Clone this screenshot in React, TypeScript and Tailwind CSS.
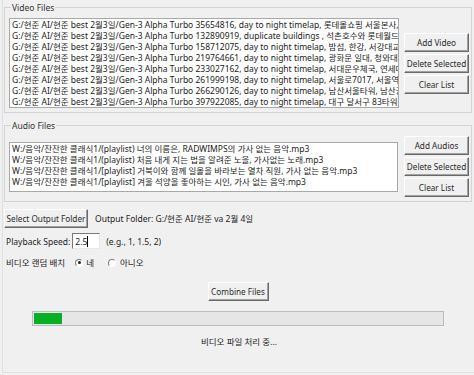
const videoFiles = [
  "G:/현준 AI/현준 best 2월3일/Gen-3 Alpha Turbo 35654816, day to night timelap, 롯데몰쇼핑 서울본사, 소공동",
  "G:/현준 AI/현준 best 2월3일/Gen-3 Alpha Turbo 132890919, duplicate buildings , 석촌호수와 롯데월드타워",
  "G:/현준 AI/현준 best 2월3일/Gen-3 Alpha Turbo 158712075, day to night timelap, 밤섬, 한강, 서강대교",
  "G:/현준 AI/현준 best 2월3일/Gen-3 Alpha Turbo 219764661, day to night timelap, 광화문 일대, 청와대",
  "G:/현준 AI/현준 best 2월3일/Gen-3 Alpha Turbo 233027162, day to night timelap, 서대문우체국, 연세대",
  "G:/현준 AI/현준 best 2월3일/Gen-3 Alpha Turbo 261999198, day to night timelap, 서울로7017, 서울역, 남대문",
  "G:/현준 AI/현준 best 2월3일/Gen-3 Alpha Turbo 266290126, day to night timelap, 남산서울타워, 남산공원",
  "G:/현준 AI/현준 best 2월3일/Gen-3 Alpha Turbo 397922085, day to night timelap, 대구 달서구 83타워, 이월드",
];

const audioFiles = [
  "W:/음악/잔잔한 클래식1/(playlist) 너의 이름은, RADWIMPS의 가사 없는 음악.mp3",
  "W:/음악/잔잔한 클래식1/(playlist) 처음 내게 지는 법을 알려준 노을, 가사없는 노래.mp3",
  "W:/음악/잔잔한 클래식1/[playlist] 거북이와 함께 일몰을 바라보는 열차 직원, 가사 없는 음악.mp3",
  "W:/음악/잔잔한 클래식1/[playlist] 겨울 석양을 좋아하는 시인, 가사 없는 음악.mp3",
];

const Button = ({ label, className = "" }: { label: string; className?: string }) => (
  <div
    className={`flex h-[19px] items-center justify-center whitespace-nowrap border border-t-white border-l-white border-r-[#6a6a6a] border-b-[#6a6a6a] bg-[#f0f0f0] text-[8.2px] text-[#2a2a2a] shadow-[inset_-1px_-1px_0_#a0a0a0] ${className}`}
  >
    {label}
  </div>
);

const Radio = ({ checked }: { checked?: boolean }) => (
  <span className="flex h-[8px] w-[8px] items-center justify-center rounded-full border border-t-[#808080] border-l-[#808080] border-r-white border-b-white bg-white">
    {checked && <span className="h-[3px] w-[3px] rounded-full bg-[#222]" />}
  </span>
);

const Group = ({ label, children }: { label: string; children: React.ReactNode }) => (
  <fieldset className="w-[466px] border border-[#d4d4d4] px-[2px] pt-[5px] pb-[4px]">
    <legend className="ml-[4px] h-[11px] px-[1px] text-[#333]">{label}</legend>
    {children}
  </fieldset>
);

export default function App() {
  return (
    <div className="h-[375px] w-[474px] overflow-hidden bg-[#f0f0f0] font-['Noto_Sans','Noto_Sans_CJK_KR',sans-serif] text-[8.5px] leading-[11px] text-[#222]">
      <div className="ml-[2px] flex h-[373px] flex-col border-b border-l border-[#e0e0e0] pl-[1px] pt-[2px]">
        <Group label="Video Files">
          <div className="flex items-center">
            <div className="ml-[2px] h-[90px] w-[390px] overflow-hidden whitespace-nowrap border border-[#a8a8a8] bg-white pl-[2px]">
              {videoFiles.map((f) => (
                <div key={f}>{f}</div>
              ))}
            </div>
            <div className="ml-[5px] flex w-[65px] flex-col gap-[2px]">
              <Button label="Add Video" />
              <Button label="Delete Selected" />
              <Button label="Clear List" />
            </div>
          </div>
        </Group>

        <div className="mt-[7px]">
          <Group label="Audio Files">
            <div className="flex items-center">
              <div className="ml-[2px] h-[50px] w-[389px] overflow-hidden whitespace-nowrap border border-[#a8a8a8] bg-white pl-[2px]">
                {audioFiles.map((f) => (
                  <div key={f}>{f}</div>
                ))}
              </div>
              <div className="ml-[6px] flex w-[65px] flex-col gap-[2px]">
                <Button label="Add Audios" />
                <Button label="Delete Selected" />
                <Button label="Clear List" />
              </div>
            </div>
          </Group>
        </div>

        <div className="mt-[7px] flex items-center">
          <Button label="Select Output Folder" className="w-[84px]" />
          <span className="ml-[7px]">Output Folder: G:/현준 AI/현준 va 2월 4일</span>
        </div>

        <div className="mt-[5px] flex h-[16px] items-center pl-[2px]">
          <span>Playback Speed:</span>
          <div className="ml-[2px] flex h-[16px] w-[28px] items-center border border-t-[#7a7a7a] border-l-[#7a7a7a] border-r-[#e8e8e8] border-b-[#e8e8e8] bg-white pl-[2px]">
            2.5
            <span className="h-[11px] w-[1px] bg-black" />
          </div>
          <span className="ml-[6px]">(e.g., 1, 1.5, 2)</span>
        </div>

        <div className="mt-[8px] flex h-[11px] items-center pl-[2px]">
          <span>비디오 랜덤 배치</span>
          <span className="ml-[10px]">
            <Radio checked />
          </span>
          <span className="ml-[3px]">네</span>
          <span className="ml-[14px]">
            <Radio />
          </span>
          <span className="ml-[4px]">아니오</span>
        </div>

        <div className="mt-[14px] flex justify-center pr-[2px]">
          <Button label="Combine Files" className="w-[61px]" />
        </div>

        <div className="ml-[28px] mt-[10px] h-[15px] w-[412px] border border-[#bcbcbc] bg-[#e6e6e6] p-[1px]">
          <div className="h-full w-[28px] bg-[#06b025]" />
        </div>

        <div className="mt-[10px] text-center">비디오 파일 처리 중...</div>
      </div>
    </div>
  );
}
